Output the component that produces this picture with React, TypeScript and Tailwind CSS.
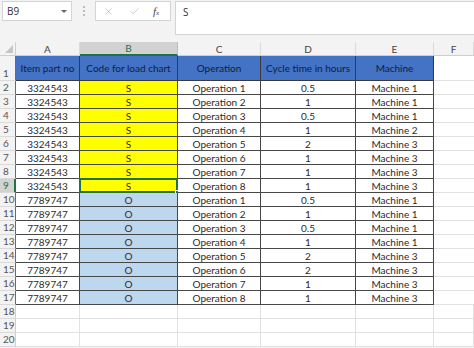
import { X, Check } from 'lucide-react'

type Row = [string, string, string, string, string]

const cols = ['A', 'B', 'C', 'D', 'E', 'F']

const header: Row = ['Item part no', 'Code for load chart', 'Operation', 'Cycle time in hours', 'Machine']

const rows: Row[] = [
  ['3324543', 'S', 'Operation 1', '0.5', 'Machine 1'],
  ['3324543', 'S', 'Operation 2', '1', 'Machine 1'],
  ['3324543', 'S', 'Operation 3', '0.5', 'Machine 1'],
  ['3324543', 'S', 'Operation 4', '1', 'Machine 2'],
  ['3324543', 'S', 'Operation 5', '2', 'Machine 3'],
  ['3324543', 'S', 'Operation 6', '1', 'Machine 3'],
  ['3324543', 'S', 'Operation 7', '1', 'Machine 3'],
  ['3324543', 'S', 'Operation 8', '1', 'Machine 3'],
  ['7789747', 'O', 'Operation 1', '0.5', 'Machine 1'],
  ['7789747', 'O', 'Operation 2', '1', 'Machine 1'],
  ['7789747', 'O', 'Operation 3', '0.5', 'Machine 1'],
  ['7789747', 'O', 'Operation 4', '1', 'Machine 1'],
  ['7789747', 'O', 'Operation 5', '2', 'Machine 3'],
  ['7789747', 'O', 'Operation 6', '2', 'Machine 3'],
  ['7789747', 'O', 'Operation 7', '1', 'Machine 3'],
  ['7789747', 'O', 'Operation 8', '1', 'Machine 3']
]

const RowHead = ({ n, tall, table }: { n: number; tall?: boolean; table?: boolean }) => (
  <div
    className={`flex items-end pl-[3px] text-[10px] leading-[13px] border-b border-b-[#dadada] border-r ${
      n === 9 ? 'bg-[#d2d2d2] text-[#217346] border-r-2 border-r-[#217346]' : 'bg-[#f3f3f3] text-[#555]'
    } ${table && n !== 9 ? 'border-r-[#6a6a6a]' : n !== 9 ? 'border-r-[#cfcfcf]' : ''} ${tall ? 'h-[25px]' : 'h-[14px]'}`}
  >
    {n}
  </div>
)

const App = () => {
  return (
    <div className="w-[474px] h-[348px] overflow-hidden bg-[#f3f3f3] font-['Lato','Liberation_Sans',sans-serif] text-[#2b2b2b]">
      {/* Formula bar */}
      <div className="h-[42px] flex items-start pt-px pl-[2px]">
        <div className="w-[70px] h-[20px] bg-white border border-[#d4d4d4] flex items-center justify-between pl-[4px] pr-[4px] text-[10px] font-['Open_Sans',sans-serif] text-[#333]">
          <span>B9</span>
          <span className="w-0 h-0 border-l-[3px] border-r-[3px] border-t-[3px] border-l-transparent border-r-transparent border-t-[#666]" />
        </div>
        <div className="w-[23px] h-[20px] flex flex-col items-center justify-center gap-[2px]">
          <span className="w-[2px] h-[2px] bg-[#bdbdbd]" />
          <span className="w-[2px] h-[2px] bg-[#bdbdbd]" />
          <span className="w-[2px] h-[2px] bg-[#bdbdbd]" />
        </div>
        <div className="w-[76px] h-[20px] bg-white border border-[#d4d4d4] flex items-center">
          <X size={11} strokeWidth={1.3} className="ml-[7px] text-[#a8a8a8]" />
          <Check size={11} strokeWidth={1.3} className="ml-[15px] text-[#a8a8a8]" />
          <span className="ml-[13px] text-[11px] italic font-['Liberation_Serif',serif] text-[#444]">
            f<span className="text-[7px]">x</span>
          </span>
        </div>
        <div className="ml-[4px] flex-1 h-[34px] bg-white border border-[#d4d4d4] border-r-0 pl-[7px] pt-[3px] text-[10px] font-['Open_Sans',sans-serif] text-[#333]">
          S
        </div>
      </div>

      {/* Grid */}
      <div className="grid grid-cols-[16px_64px_98px_83px_95px_78px_1fr] bg-white">
        {/* column headers */}
        <div className="h-[14px] bg-[#f3f3f3] border-r border-b border-[#cfcfcf] flex items-end justify-end pr-[2px] pb-[2px]">
          <svg width="8" height="8" viewBox="0 0 8 8">
            <path d="M8 0 L8 8 L0 8 Z" fill="#c6c6c6" />
          </svg>
        </div>
        {cols.map((c) => (
          <div
            key={c}
            className={`h-[14px] flex items-center justify-center text-[10px] leading-none border-r ${
              c === 'B'
                ? 'bg-[#d2d2d2] text-[#217346] border-b-2 border-b-[#217346] border-r-[#bdbdbd]'
                : 'bg-[#f3f3f3] text-[#444] border-b border-b-[#cfcfcf] border-r-[#dadada]'
            }`}
          >
            {c}
          </div>
        ))}

        {/* header row */}
        <RowHead n={1} tall table />
        {header.map((h, i) => (
          <div
            key={i}
            className="h-[25px] bg-[#4472c4] border-r border-b border-[#3a3a3a] flex items-center justify-center text-[10px] text-[#0e1e3c] whitespace-nowrap overflow-hidden"
          >
            {h}
          </div>
        ))}
        <div className="h-[25px] border-b border-[#e1e1e1]" />

        {/* data */}
        {rows.map((r, ri) => {
          const n = ri + 2
          return [
            <RowHead key={`h${n}`} n={n} table />,
            ...r.map((v, ci) => {
              const fill = ci === 1 ? (v === 'S' ? 'bg-[#ffff00]' : 'bg-[#bdd7ee]') : 'bg-white'
              const selected = n === 9 && ci === 1
              return (
                <div
                  key={`${n}-${ci}`}
                  className={`relative h-[14px] ${fill} border-r border-b border-[#474747] flex items-center justify-center text-[10px] leading-none whitespace-nowrap`}
                >
                  {v}
                  {selected && (
                    <div className="absolute -left-px -top-px right-[-1px] bottom-[-1px] border-2 border-[#217346]">
                      <div className="absolute -right-[4px] -bottom-[4px] w-[5px] h-[5px] bg-[#217346] border border-white" />
                    </div>
                  )}
                </div>
              )
            }),
            <div key={`f${n}`} className="h-[14px] border-b border-[#e1e1e1]" />
          ]
        })}

        {/* blank rows */}
        {[18, 19, 20].map((n) => [
          <RowHead key={`h${n}`} n={n} />,
          ...cols.map((c) => (
            <div key={`${n}${c}`} className="h-[14px] border-r border-b border-[#e1e1e1]" />
          ))
        ])}
      </div>
    </div>
  )
}

export default App
